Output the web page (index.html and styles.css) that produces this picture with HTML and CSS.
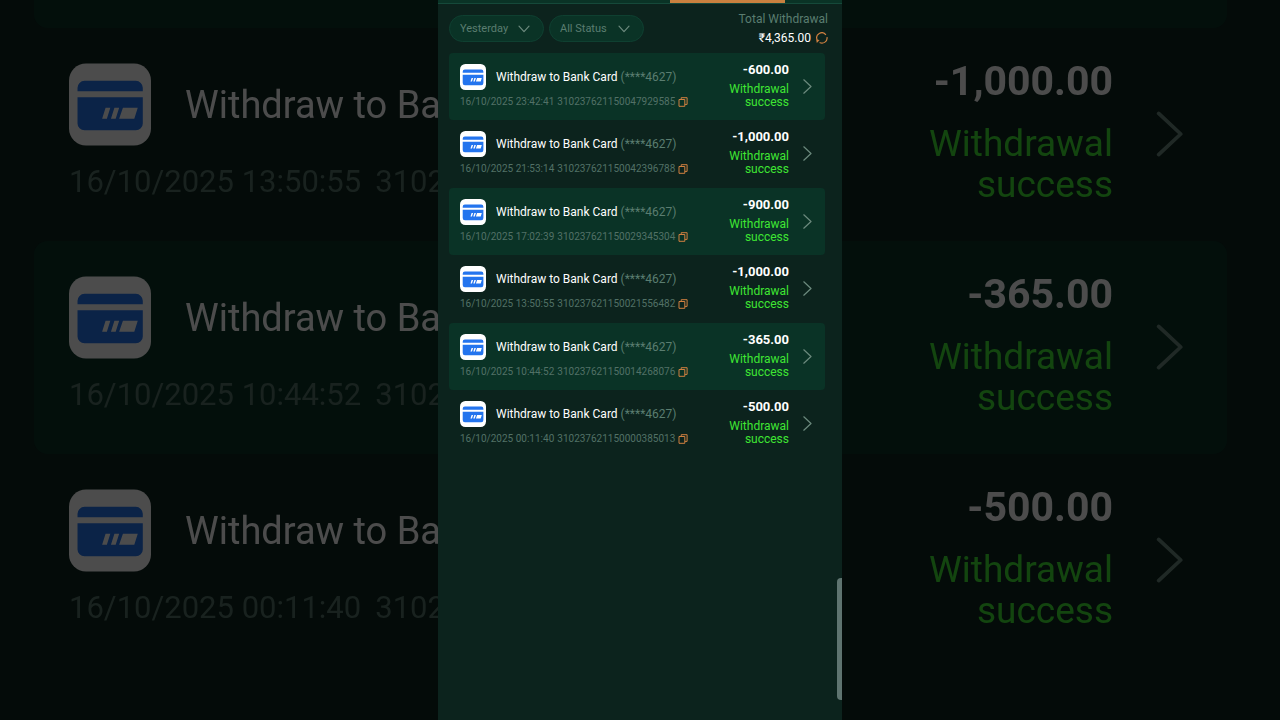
FILE: index.html
```html
<!DOCTYPE html>
<html lang="en">
<head>
    <meta charset="UTF-8">
    <meta name="viewport" content="width=device-width, initial-scale=1.0">
    <title>Withdrawal History</title>
    <link rel="stylesheet" href="styles.css">
</head>
<body>
    <div class="backdrop" aria-hidden="true">
        <ul class="records" id="backdrop-records"></ul>
    </div>

    <main class="phone">
        <div class="tabs"><span class="tab-line"></span></div>

        <header class="toolbar">
            <div class="filter">
                <select aria-label="Date">
                    <option>Yesterday</option>
                    <option>Today</option>
                </select>
                <svg class="filter-arrow" viewBox="0 0 12 8"><path d="M1 1.2 6 6.6 11 1.2"/></svg>
            </div>
            <div class="filter">
                <select aria-label="Status">
                    <option>All Status</option>
                    <option>Withdrawal success</option>
                </select>
                <svg class="filter-arrow" viewBox="0 0 12 8"><path d="M1 1.2 6 6.6 11 1.2"/></svg>
            </div>
            <div class="total">
                <span class="total-label">Total Withdrawal</span>
                <div class="total-value">
                    <span>₹4,365.00</span>
                    <button class="icon-button" aria-label="Refresh">
                        <svg class="refresh" viewBox="0 0 12 12">
                            <path d="M1.2 8A5.1 5.1 0 0 1 9.9 2.8M11 5.2A5.1 5.1 0 0 1 3.6 10.5"/>
                            <path class="solid" d="M.2 7.6 3.6 8 .8 11.1Z"/>
                        </svg>
                    </button>
                </div>
            </div>
        </header>

        <ul class="records" id="records"></ul>

        <div class="scroll-thumb"></div>
    </main>

    <script>
        const records = [
            { time: "16/10/2025 23:42:41", order: "310237621150047929585", amount: "-600.00" },
            { time: "16/10/2025 21:53:14", order: "310237621150042396788", amount: "-1,000.00" },
            { time: "16/10/2025 17:02:39", order: "310237621150029345304", amount: "-900.00" },
            { time: "16/10/2025 13:50:55", order: "310237621150021556482", amount: "-1,000.00" },
            { time: "16/10/2025 10:44:52", order: "310237621150014268076", amount: "-365.00" },
            { time: "16/10/2025 00:11:40", order: "310237621150000385013", amount: "-500.00" }
        ];

        const cardIcon = `
            <svg class="card-icon" viewBox="0 0 26 26">
                <rect width="26" height="26" rx="5.4" fill="#fff"/>
                <path d="M2.7 8.8V7.7a2.2 2.2 0 0 1 2.2-2.2h16.3a2.2 2.2 0 0 1 2.2 2.2v1.1ZM2.7 10.7h20.7V19a2.2 2.2 0 0 1-2.2 2.2H4.9A2.2 2.2 0 0 1 2.7 19Z" fill="#2374ee"/>
                <path d="m11.6 14h1.5l-1.1 3.5h-1.5ZM14.4 14h1.5l-1.1 3.5h-1.5ZM17.1 14h4.7l-1.1 3.5h-4.8Z" fill="#fff"/>
            </svg>`;

        const copyIcon = `
            <svg class="copy-icon" viewBox="0 0 10 10">
                <path d="M3.2 2.4V.7h5.9v6.7H6.9M1 2.5h5.8v6.8H1Z"/>
            </svg>`;

        function sideHtml(record) {
            return `
                <div class="record-side">
                    <div class="amount">${record.amount}</div>
                    <div class="status">Withdrawal success</div>
                </div>
                <svg class="arrow" viewBox="0 0 9 15"><path d="M.8.8 8 7.5.8 14.2"/></svg>
            `;
        }

        function recordHtml(record) {
            return `
                <div class="record-main">
                    <div class="record-title">${cardIcon}<span>Withdraw to Bank Card <span class="card-number">(****4627)</span></span></div>
                    <div class="record-meta">
                        <span>${record.time}</span><span>${record.order}</span>
                        <button class="icon-button" aria-label="Copy order number">${copyIcon}</button>
                    </div>
                </div>
                ${sideHtml(record)}
            `;
        }

        // the backdrop only needs the start of the long texts, the phone covers the rest
        function backdropHtml(record) {
            return `
                <div class="record-main">
                    <div class="record-title">${cardIcon}<span>Withdraw to Ba</span></div>
                    <div class="record-meta"><span>${record.time}</span><span>${record.order.slice(0, 4)}</span></div>
                </div>
                ${sideHtml(record)}
            `;
        }

        function addRecord(list, html) {
            const item = document.createElement("li");
            item.className = "record";
            item.innerHTML = html;
            list.appendChild(item);
        }

        const list = document.getElementById("records");
        records.forEach(record => addRecord(list, recordHtml(record)));

        const backdropList = document.getElementById("backdrop-records");
        const peek = document.createElement("li");
        peek.className = "record record-peek";
        backdropList.appendChild(peek);
        records.slice(3).forEach(record => addRecord(backdropList, backdropHtml(record)));
    </script>
</body>
</html>
```

FILE: styles.css
```css
* {
    box-sizing: border-box;
}

body {
    margin: 0;
    min-height: 100vh;
    display: flex;
    justify-content: center;
    position: relative;
    overflow: hidden;
    background-color: #030908;
    color: #FFFFFF;
    font-family: Roboto, "Noto Sans", sans-serif;
}

.phone {
    position: relative;
    width: 100%;
    max-width: 404px;
    background-color: #0C231D;
}

.tabs {
    display: flex;
    justify-content: flex-end;
    height: 4px;
    padding-right: 57px;
    background-color: #0A3326;
    border-bottom: 1px solid #15493A;
}

.tab-line {
    width: 115px;
    height: 3px;
    background-color: #C9803F;
}

.toolbar {
    display: flex;
    align-items: center;
    gap: 5px;
    height: 49px;
    padding: 0 14px 0 11px;
}

.filter {
    position: relative;
}

.filter select {
    display: block;
    width: 95px;
    height: 27px;
    padding: 0 10px;
    appearance: none;
    border: 1px solid #0F4031;
    border-radius: 14px;
    background-color: #0A3326;
    color: #5A7D70;
    font-family: inherit;
    font-size: 11px;
}

.filter-arrow {
    position: absolute;
    top: 10px;
    right: 14px;
    width: 12px;
    height: 8px;
    pointer-events: none;
}

.filter-arrow path,
.arrow path {
    fill: none;
    stroke: #6C8A7E;
    stroke-width: 1.2;
    stroke-linecap: round;
    stroke-linejoin: round;
}

.total {
    flex: 1;
    text-align: right;
    font-size: 12px;
    line-height: 19px;
}

.total-label {
    color: #5A7D70;
}

.total-value {
    display: flex;
    justify-content: flex-end;
    align-items: center;
    gap: 5px;
}

.icon-button {
    display: flex;
    padding: 0;
    border: none;
    background: none;
    cursor: pointer;
}

.refresh {
    width: 12px;
    height: 12px;
}

.refresh path,
.copy-icon path {
    fill: none;
    stroke: #D08040;
    stroke-width: 1.2;
}

.copy-icon path {
    stroke-width: 1;
}

.refresh .solid {
    fill: #D08040;
    stroke: none;
}

.records {
    list-style: none;
    margin: 0 17px 0 11px;
    padding: 0;
}

.record {
    display: flex;
    height: 67px;
    padding: 8px 13px 0 11px;
    border-radius: 4px;
}

.record:nth-child(even) {
    height: 68px;
}

.record:nth-child(odd) {
    background-color: #0A3326;
}

.record-main {
    flex: 1;
    padding-top: 3px;
    white-space: nowrap;
}

.record-title {
    display: flex;
    align-items: center;
    gap: 10px;
    font-size: 12px;
}

.card-icon {
    flex: none;
    width: 26px;
    height: 26px;
}

.card-number {
    color: #5A7D70;
}

.record-meta {
    display: flex;
    align-items: center;
    gap: 3px;
    margin-top: 5px;
    color: #527166;
    font-size: 10px;
    line-height: 13px;
}

.copy-icon {
    width: 10px;
    height: 10px;
}

.record-side {
    width: 70px;
    text-align: right;
}

.amount {
    font-size: 13px;
    font-weight: bold;
    line-height: 18px;
}

.status {
    margin-top: 4px;
    color: #3FE633;
    font-size: 12px;
    line-height: 13px;
}

.arrow {
    width: 9px;
    height: 15px;
    margin: 18px 0 0 14px;
}

.scroll-thumb {
    position: absolute;
    right: 0;
    bottom: 20px;
    width: 5px;
    height: 122px;
    border-radius: 4px 0 0 4px;
    background-color: #5F7470;
}

/* enlarged, dimmed list */
.backdrop {
    position: absolute;
    inset: 0;
    overflow: hidden;
    background-color: #0C231D;
    filter: brightness(0.3);
}

.backdrop .records {
    margin: 0 53px 0 34px;
}

.backdrop .record {
    height: 213px;
    padding: 28px 43px 0 35px;
    border-radius: 14px;
}

.backdrop .record-peek {
    height: 28px;
    padding: 0;
    border-radius: 0 0 14px 14px;
}

.backdrop .record-main {
    padding-top: 7px;
}

.backdrop .record-title {
    gap: 34px;
    font-size: 38px;
}

.backdrop .card-icon {
    width: 82px;
    height: 83px;
}

.backdrop .record-meta {
    gap: 14px;
    margin-top: 16px;
    font-size: 31px;
    line-height: 40px;
}

.backdrop .record-side {
    width: 220px;
}

.backdrop .amount {
    font-size: 41px;
    line-height: 50px;
}

.backdrop .status {
    margin-top: 17px;
    font-size: 37px;
    line-height: 41px;
}

.backdrop .arrow {
    width: 28px;
    height: 46px;
    margin: 55px 0 0 43px;
}
```
